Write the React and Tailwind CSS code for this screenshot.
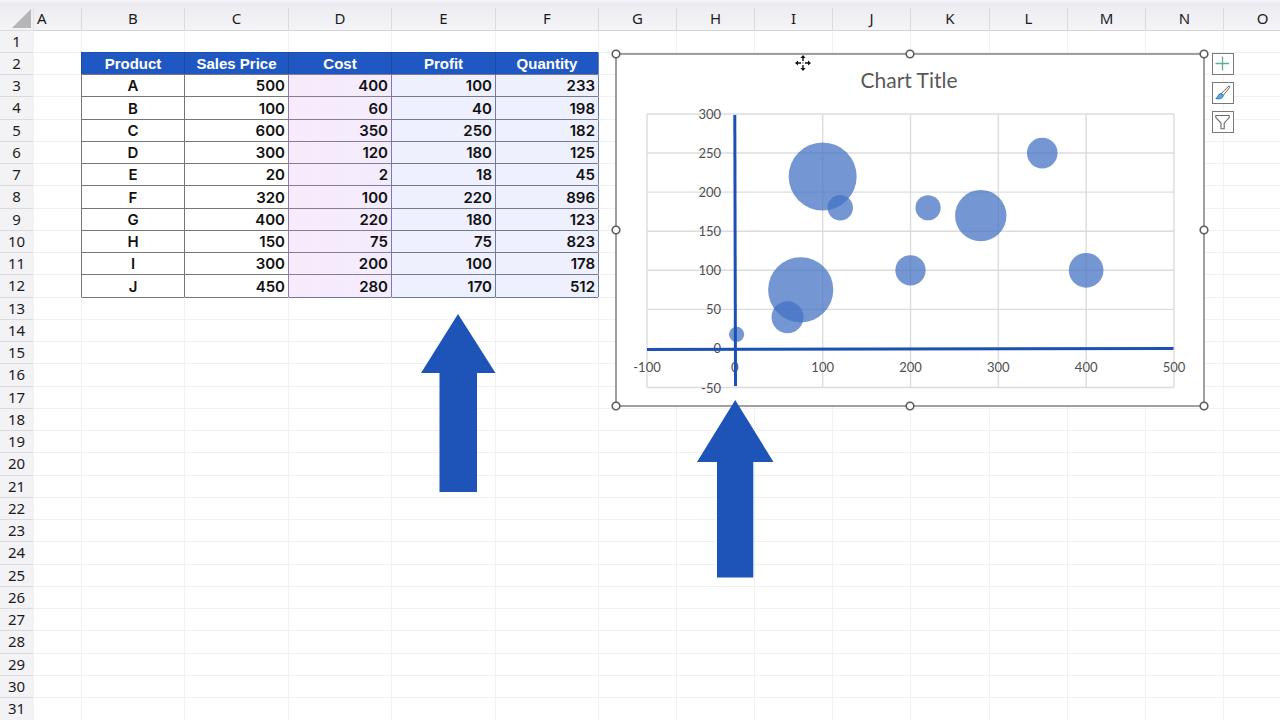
import React from "react";

const COLUMNS = [
  { id: "A", width: "w-[48px]" },
  { id: "B", width: "w-[103px]" },
  { id: "C", width: "w-[104px]" },
  { id: "D", width: "w-[103px]" },
  { id: "E", width: "w-[104px]" },
  { id: "F", width: "w-[103px]" },
  { id: "G", width: "w-[78px]" },
  { id: "H", width: "w-[78px]" },
  { id: "I", width: "w-[78px]" },
  { id: "J", width: "w-[78px]" },
  { id: "K", width: "w-[79px]" },
  { id: "L", width: "w-[78px]" },
  { id: "M", width: "w-[78px]" },
  { id: "N", width: "w-[78px]" },
  { id: "O", width: "" },
];

const FIELDS = ["Product", "Sales Price", "Cost", "Profit", "Quantity"];

const PRODUCTS = [
  ["A", 500, 400, 100, 233],
  ["B", 100, 60, 40, 198],
  ["C", 600, 350, 250, 182],
  ["D", 300, 120, 180, 125],
  ["E", 20, 2, 18, 45],
  ["F", 320, 100, 220, 896],
  ["G", 400, 220, 180, 123],
  ["H", 150, 75, 75, 823],
  ["I", 300, 200, 100, 178],
  ["J", 450, 280, 170, 512],
];

const ROWS = Array.from({ length: 31 }, (_, i) => i + 1);
const FIRST_ROW = 2;
const LAST_ROW = FIRST_ROW + PRODUCTS.length;

const SIDE = {
  1: "border-l-[#77757c]",
  2: "border-l-[#77757c]",
  3: "border-l-[#8f7fb4]",
  4: "border-l-[#8079b0]",
  5: "border-l-[#747ca3]",
  6: "border-l-[#6d7fae]",
};
const TOP = {
  1: "border-t-[#77757c]",
  2: "border-t-[#77757c]",
  3: "border-t-[#887b94]",
  4: "border-t-[#777991]",
  5: "border-t-[#777991]",
};
const FILL = {
  1: "bg-white text-center",
  2: "bg-white text-right pr-[3px]",
  3: "bg-linear-to-r from-[#f8ebfb] to-[#f3ecfd] text-right pr-[3px]",
  4: "bg-[#eef0fe] text-right pr-[3px]",
  5: "bg-[#eef0fe] text-right pr-[3px]",
};

function Cell({ row, col }) {
  const inTable = col >= 1 && col <= 5;
  if (inTable && row === FIRST_ROW) {
    return (
      <th
        scope="col"
        className="border-t border-l border-t-[#1d4fb0] border-l-[#1c4aa3] bg-[#1f57c3] p-0 pt-px text-center font-['Liberation_Sans',Arial,sans-serif] text-[15px] leading-[20px] font-bold text-white"
      >
        {FIELDS[col - 1]}
      </th>
    );
  }
  if (inTable && row > FIRST_ROW && row <= LAST_ROW) {
    return (
      <td
        className={
          "border-t border-l p-0 pt-px font-['Inter',sans-serif] text-[15px] leading-[20px] font-semibold text-[#111] " +
          `${SIDE[col]} ${TOP[col]} ${FILL[col]}`
        }
      >
        {PRODUCTS[row - FIRST_ROW - 1][col - 1]}
      </td>
    );
  }
  const side =
    col === 6 && row >= FIRST_ROW && row <= LAST_ROW ? SIDE[6] : "border-l-[#f1f1f2]";
  const top =
    row === 1
      ? "border-t-[#d3d1d5]"
      : inTable && row === LAST_ROW + 1
        ? col > 2
          ? "border-t-[#6a78a8]"
          : "border-t-[#77757c]"
        : "border-t-[#f1f1f2]";
  return <td className={`border-t border-l p-0 ${side} ${top}`} />;
}

function Sheet() {
  return (
    <table className="w-full min-w-[1301px] table-fixed border-separate border-spacing-0">
      <colgroup>
        <col className="w-[33px]" />
        {COLUMNS.map((c) => (
          <col key={c.id} className={c.width} />
        ))}
      </colgroup>
      <thead>
        <tr className="h-[22px] bg-linear-to-b from-[#eeedf2] to-[#f4f3f6] font-['Noto_Sans',sans-serif] text-[15px] leading-[20px] text-[#1c1c1e]">
          <td className="p-0">
            <button type="button" aria-label="Select all" className="flex h-[22px] w-full items-end justify-end pr-[2px] pb-[2px]">
              <svg width="19" height="19" viewBox="0 0 19 19" aria-hidden="true">
                <path d="M19 0V19H0Z" fill="#b6b5b7" />
              </svg>
            </button>
          </td>
          {COLUMNS.map((c, i) => (
            <th
              key={c.id}
              scope="col"
              className={
                i === 0
                  ? "border-l border-[#e3e1e5] p-0 pb-[2px] pl-[3px] text-left font-normal"
                  : "border-l border-[#dbd9de] p-0 pb-[2px] text-center font-normal"
              }
            >
              {c.id}
            </th>
          ))}
        </tr>
      </thead>
      <tbody>
        {ROWS.map((row) => (
          <tr key={row} className={row % 4 === 0 || row === 31 ? "h-[23px]" : "h-[22px]"}>
            <th
              scope="row"
              className="border-t border-[#dcdade] bg-[#f3f2f5] p-0 pb-[2px] text-center font-['Noto_Sans',sans-serif] text-[15px] leading-[18px] font-normal text-[#1c1c1e]"
            >
              {row}
            </th>
            {COLUMNS.map((c, col) => (
              <Cell key={c.id} row={row} col={col} />
            ))}
          </tr>
        ))}
      </tbody>
    </table>
  );
}

/* Plot area inside the 600 x 364 chart drawing. */
const px = (v) => 37 + (v + 100) * (527 / 600);
const py = (v) => 66 + (300 - v) * (273.5 / 350);
const X_TICKS = [-100, 0, 100, 200, 300, 400, 500];
const Y_TICKS = [300, 250, 200, 150, 100, 50, 0, -50];
const HANDLES = [
  [6, 6], [300, 6], [594, 6],
  [6, 182], [594, 182],
  [6, 358], [300, 358], [594, 358],
];

function BubbleChart() {
  return (
    <svg
      width="600"
      height="364"
      viewBox="0 0 600 364"
      role="img"
      aria-label="Chart Title"
      className="font-['Lato',sans-serif]"
    >
      <rect x="6" y="6" width="588" height="352" fill="#fff" stroke="#6f6d6f" strokeWidth="1.3" />
      <text x="299" y="40" textAnchor="middle" fontSize="21" fill="#595959">
        Chart Title
      </text>
      <g stroke="#dcdcdd" strokeWidth="1.4">
        {X_TICKS.map((v) => (
          <line key={v} x1={px(v)} x2={px(v)} y1={py(300)} y2={py(-50)} />
        ))}
        {Y_TICKS.map((v) => (
          <line key={v} x1={px(-100)} x2={px(500)} y1={py(v)} y2={py(v)} />
        ))}
      </g>
      <g fill="#4472c4" fillOpacity="0.74">
        {PRODUCTS.map(([name, , cost, profit, quantity]) => (
          <circle key={name} cx={px(cost)} cy={py(profit)} r={Math.sqrt(quantity) * 1.136} />
        ))}
      </g>
      <g fontSize="13" fill="#4f4f52">
        {Y_TICKS.map((v) => (
          <text key={v} x="111" y={py(v) + 5} textAnchor="end">
            {v}
          </text>
        ))}
        {X_TICKS.map((v) => (
          <text key={v} x={px(v)} y="324" textAnchor="middle">
            {v}
          </text>
        ))}
      </g>
      <g stroke="#1d50b4" strokeWidth="3">
        <line x1="37" y1="301.5" x2="563.5" y2="300.5" />
        <line x1="124.8" y1="67" x2="125.5" y2="338" />
      </g>
      <g fill="#fff" stroke="#5d5b5d" strokeWidth="1.6">
        {HANDLES.map(([x, y]) => (
          <circle key={`${x}-${y}`} cx={x} cy={y} r="3.8" />
        ))}
      </g>
      <g transform="translate(193 15)" fill="#111" stroke="#111">
        <path
          d="M0 -5V-2M0 2V5M-5 0H-2M2 0H5"
          strokeWidth="1.4"
          fill="none"
        />
        <rect x="-0.5" y="-0.5" width="1" height="1" stroke="none" />
        <path
          d="M0 -8L2.6 -5H-2.6ZM0 8L2.6 5H-2.6ZM-8 0L-5 -2.6V2.6ZM8 0L5 -2.6V2.6Z"
          stroke="none"
        />
      </g>
    </svg>
  );
}

function ChartButton({ label, children }) {
  return (
    <button
      type="button"
      aria-label={label}
      className="flex size-[22px] items-center justify-center border border-[#7a787a] bg-white"
    >
      <svg width="20" height="20" viewBox="0 0 20 20" fill="none" aria-hidden="true">
        {children}
      </svg>
    </button>
  );
}

function ChartTools() {
  return (
    <div className="flex flex-col gap-[7px] pt-[5px]">
      <ChartButton label="Chart Elements">
        <path d="M9.5 2.5V16.5M2.5 9.5H16" stroke="#5fae95" strokeWidth="1.3" />
      </ChartButton>
      <ChartButton label="Chart Styles">
        <path
          d="M8.2 10.6L15 3.8Q16.6 2.6 16.7 3.4Q16.8 4.2 16 5.2L10.3 12.4Z"
          fill="#fff"
          stroke="#666"
          strokeWidth="1"
        />
        <path
          d="M8 10.6Q10.2 11 10.2 12.8C9.8 15.6 6.4 16.6 2.8 15.4Q4.6 14.8 5 13Q5.8 10.6 8 10.6Z"
          fill="#5aaae6"
          stroke="#2d72ad"
          strokeWidth="0.9"
        />
      </ChartButton>
      <ChartButton label="Chart Filters">
        <path
          d="M2.8 3.5H16.2V5.6L11.2 11V16.8H8V11L2.8 5.6Z"
          stroke="#6a686a"
          strokeWidth="1.1"
          strokeLinejoin="round"
        />
      </ChartButton>
    </div>
  );
}

export default function App() {
  return (
    <main className="relative min-h-screen overflow-hidden bg-white">
      <div className="h-2 bg-linear-to-b from-[#f5f4f9] via-[#ebeaf1] to-[#eeedf2]" />
      <Sheet />

      <section aria-label="Chart" className="absolute top-[48px] left-[610px] flex gap-[2px]">
        <BubbleChart />
        <ChartTools />
      </section>

      <svg
        className="absolute top-[314px] left-[421px]"
        width="75"
        height="178"
        viewBox="0 0 75 178"
        aria-hidden="true"
      >
        <path d="M37 0L74.5 59H56V178H18.5V59H0Z" fill="#1e53b8" />
      </svg>
      <svg
        className="absolute top-[400px] left-[697px]"
        width="77"
        height="178"
        viewBox="0 0 77 178"
        aria-hidden="true"
      >
        <path d="M38.2 0L76.5 62H56.3V177.5H20V62H0Z" fill="#1e53b8" />
      </svg>
    </main>
  );
}
